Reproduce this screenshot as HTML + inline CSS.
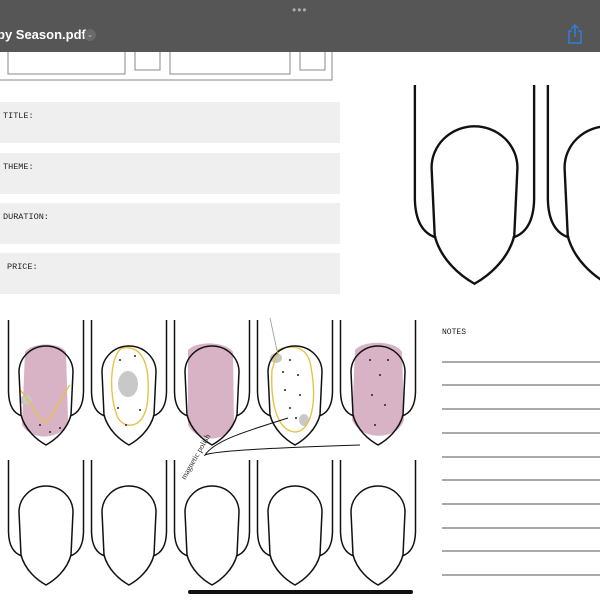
<!DOCTYPE html>
<html><head><meta charset="utf-8"><style>
html,body{margin:0;padding:0;width:600px;height:600px;overflow:hidden;background:#fff;font-family:"Liberation Sans",sans-serif}
.bar{position:absolute;left:0;top:0;width:600px;height:52px;background:#565656}
.dots{position:absolute;left:292px;top:3px;color:#aaa;font-size:12px;letter-spacing:1px}
.title{position:absolute;left:-3px;top:27px;color:#fff;font-size:13px;font-weight:bold}
.chev{position:absolute;left:84px;top:29px;width:12px;height:12px;border-radius:50%;background:#6a6a6a;color:#bbb;font-size:8px;text-align:center;line-height:12px}
.f{position:absolute;left:0;width:340px;height:41px;background:#efefef}
.f span{position:absolute;top:9px;font-family:"Liberation Mono",monospace;font-size:8.5px;color:#222}
.notes{position:absolute;left:442px;top:328px;font-family:"Liberation Mono",monospace;font-size:8px;color:#222}
</style></head><body>
<svg width="600" height="600" style="position:absolute;left:0;top:0">
<defs>
<g id="n" fill="none" stroke="#111" stroke-width="1.5">
<path d="M-37.5,0 L-37.5,72 Q-37,92 -24,96 M37.5,0 L37.5,72 Q37,92 24,96"/>
<path d="M-27,52 A27,26 0 0 1 27,52 L25,95 C21,110 9,120 0,125 C-9,120 -21,110 -25,95 Z"/>
</g>
</defs>
<g fill="none" stroke="#888" stroke-width="1">
<rect x="-5" y="45" width="337" height="35"/>
<rect x="8" y="45" width="117" height="29"/>
<rect x="135" y="45" width="25" height="25"/>
<rect x="170" y="45" width="120" height="29"/>
<rect x="300" y="45" width="25" height="25"/>
</g>
<g transform="translate(474.5,85) scale(1.59)"><use href="#n" style="stroke-width:1"/></g>
<g transform="translate(607.5,85) scale(1.59)"><use href="#n"/></g>
<path d="M25,352 C32,342 60,342 66,352 L68,420 C64,440 32,442 22,425 Z" fill="#d8b2c5"/>
<path d="M188,350 C198,340 226,342 233,352 L234,425 C226,443 197,443 188,425 Z" fill="#d8b2c5"/>
<path d="M355,350 C363,340 395,340 402,352 L404,420 C398,440 362,442 352,420 Z" fill="#d8b2c5"/>
<g fill="#c8c8c8"><ellipse cx="26" cy="400" rx="6" ry="5"/><ellipse cx="128" cy="384" rx="10" ry="13"/><ellipse cx="276" cy="358" rx="6" ry="5"/><ellipse cx="304" cy="420" rx="5" ry="6"/></g>
<g fill="none" stroke="#e6c24a" stroke-width="1.4">
<path d="M20,390 C30,400 38,420 45,422 C55,415 62,395 70,385"/>
<path d="M122,348 C140,345 150,360 148,395 C147,430 125,430 118,418 C108,395 110,355 122,348Z"/>
<path d="M278,350 C290,345 305,345 310,362 C318,400 312,430 296,432 C280,432 270,410 272,370Z"/>
</g>
<g fill="#222">
<circle cx="120" cy="360" r="1"/><circle cx="135" cy="356" r="1"/><circle cx="118" cy="408" r="1"/><circle cx="140" cy="410" r="1"/><circle cx="126" cy="425" r="1"/>
<circle cx="290" cy="360" r="1"/><circle cx="298" cy="375" r="1"/><circle cx="285" cy="390" r="1"/><circle cx="300" cy="395" r="1"/><circle cx="290" cy="408" r="1"/><circle cx="296" cy="418" r="1"/><circle cx="283" cy="372" r="1"/>
<circle cx="370" cy="360" r="1"/><circle cx="380" cy="375" r="1"/><circle cx="372" cy="395" r="1"/><circle cx="385" cy="405" r="1"/><circle cx="375" cy="425" r="1"/><circle cx="388" cy="360" r="1"/>
<circle cx="40" cy="425" r="1"/><circle cx="50" cy="432" r="1"/><circle cx="60" cy="428" r="1"/>
</g>
<use href="#n" transform="translate(46,320)"/>
<use href="#n" transform="translate(129,320)"/>
<use href="#n" transform="translate(212,320)"/>
<use href="#n" transform="translate(295,320)"/>
<use href="#n" transform="translate(378,320)"/>
<use href="#n" transform="translate(46,460)"/>
<use href="#n" transform="translate(129,460)"/>
<use href="#n" transform="translate(212,460)"/>
<use href="#n" transform="translate(295,460)"/>
<use href="#n" transform="translate(378,460)"/>
<path d="M288,418 C250,430 215,440 205,455 C215,450 300,447 360,445" fill="none" stroke="#111" stroke-width="1"/>
<path d="M270,318 L278,355" stroke="#999" stroke-width="0.8"/>
<text x="185" y="480" font-size="8" font-family="Liberation Serif,serif" transform="rotate(-60 185 480)" fill="#222">magnetic polish</text>
<g stroke="#555" stroke-width="1">
<line x1="442" y1="362" x2="600" y2="362"/><line x1="442" y1="385" x2="600" y2="385"/><line x1="442" y1="409" x2="600" y2="409"/><line x1="442" y1="433" x2="600" y2="433"/><line x1="442" y1="457" x2="600" y2="457"/><line x1="442" y1="480" x2="600" y2="480"/><line x1="442" y1="504" x2="600" y2="504"/><line x1="442" y1="528" x2="600" y2="528"/><line x1="442" y1="551" x2="600" y2="551"/><line x1="442" y1="575" x2="600" y2="575"/>
</g>
<rect x="188" y="590" width="225" height="4" rx="2" fill="#111"/>
</svg>
<div class="bar"><div class="dots">•••</div><div class="title">by Season.pdf</div><div class="chev">⌄</div>
<svg width="16" height="20" style="position:absolute;left:567px;top:24px" fill="none" stroke="#2f7fd8" stroke-width="1.5"><path d="M5,7 H2 V19 H14 V7 H11 M8,13 V1 M4.5,4.5 L8,1 L11.5,4.5"/></svg></div>
<div class="f" style="top:102px"><span style="left:3px">TITLE:</span></div>
<div class="f" style="top:153px"><span style="left:3px">THEME:</span></div>
<div class="f" style="top:203px"><span style="left:3px">DURATION:</span></div>
<div class="f" style="top:253px"><span style="left:7px">PRICE:</span></div>
<div class="notes">NOTES</div>
</body></html>
